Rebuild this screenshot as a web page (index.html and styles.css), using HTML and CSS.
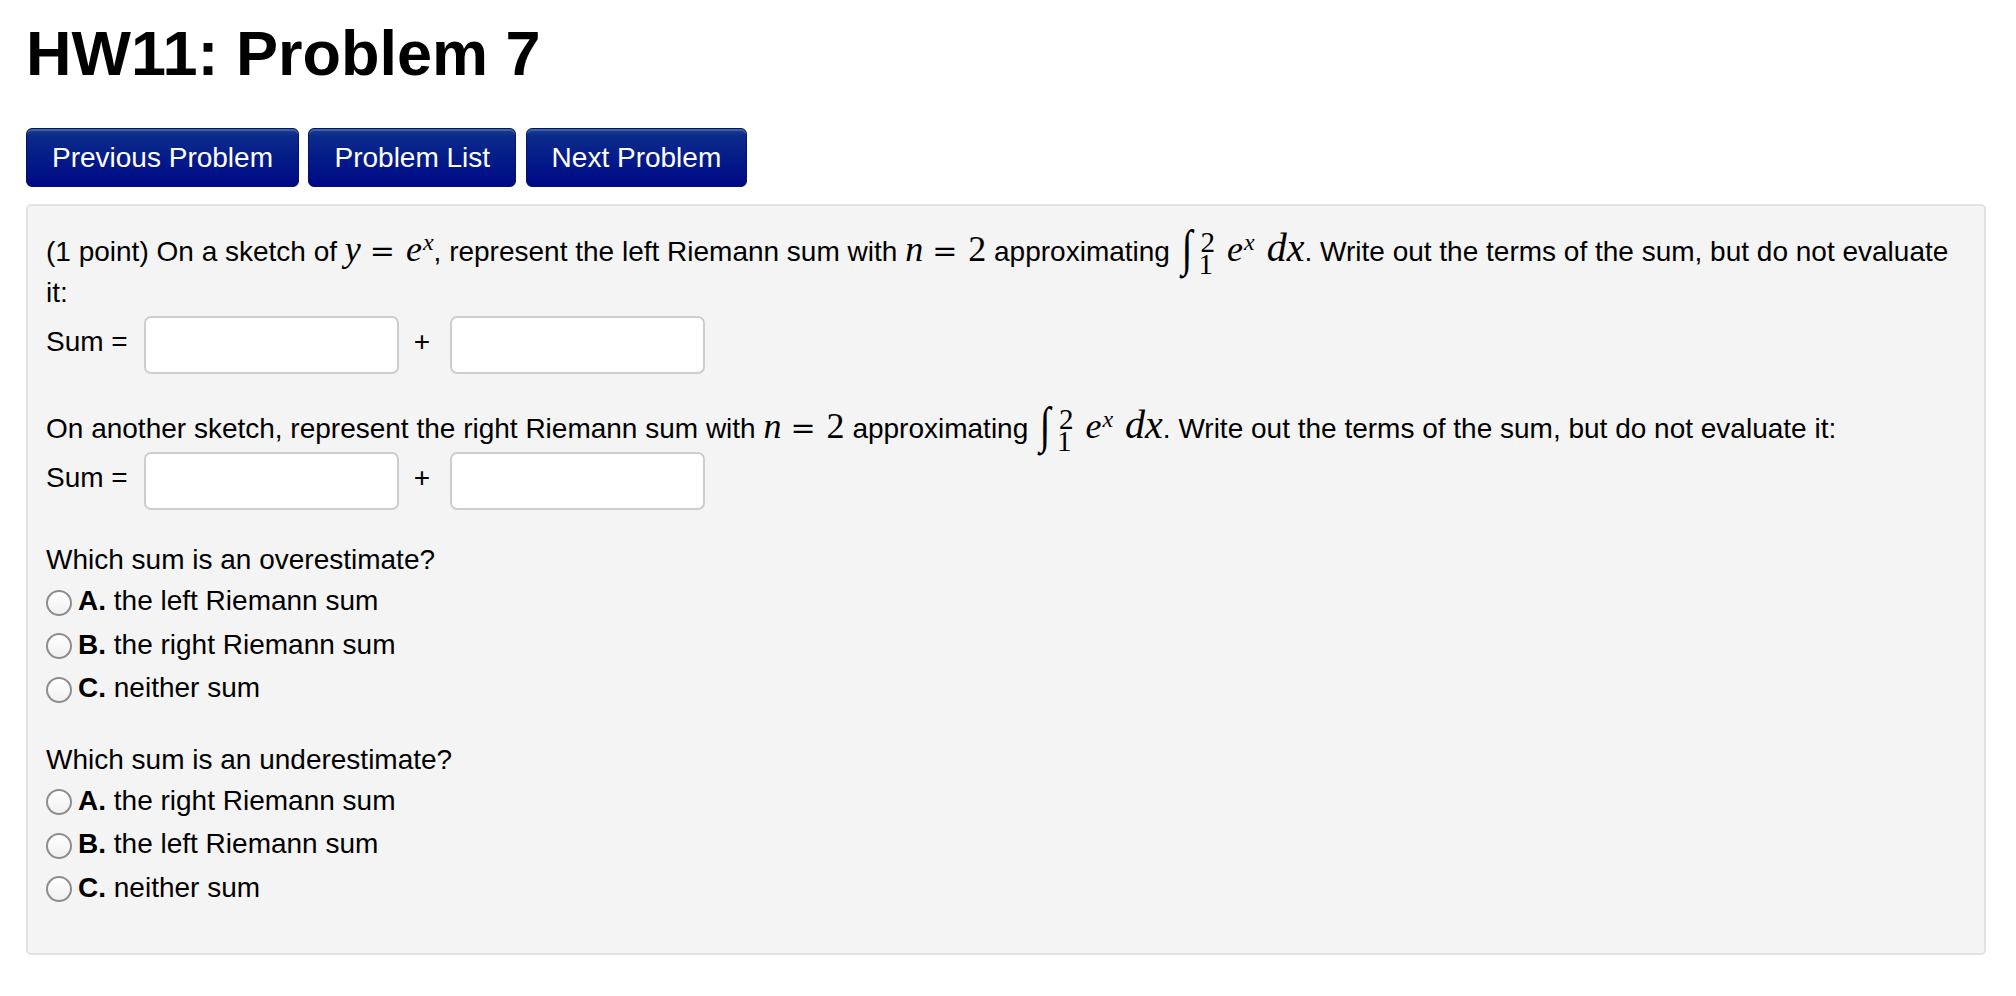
FILE: index.html
```html
<!DOCTYPE html>
<html lang="en">
<head>
    <meta charset="UTF-8">
    <meta name="viewport" content="width=device-width, initial-scale=1.0">
    <title>HW11: Problem 7</title>
<link rel="stylesheet" href="styles.css">
</head>
<body>
    <div class="page">
        <h1 class="title">HW11: Problem 7</h1>

        <div class="nav">
            <a class="nav-btn" href="#">Previous Problem</a>
            <a class="nav-btn" href="#">Problem List</a>
            <a class="nav-btn" href="#">Next Problem</a>
        </div>

        <div class="problem">
            <p class="text">(1 point) On a sketch of <span class="m"><i>y</i><span class="eq">=</span><i>e</i><sup><i>x</i></sup></span>, represent the left Riemann sum with <span class="m"><i>n</i><span class="eq">=</span>2</span> approximating <span class="m"><span class="int">∫</span><span class="lims"><span>2</span><span class="lo">1</span></span><i class="sp">e</i><sup><i>x</i></sup><i class="sp big">d</i><i class="big">x</i></span>. Write out the terms of the sum, but do not evaluate<br>it:</p>
            <div class="sum-row">
                <span class="sum-label">Sum =</span>
                <input class="ans" type="text">
                <span class="plus">+</span>
                <input class="ans" type="text">
            </div>

            <p class="text next">On another sketch, represent the right Riemann sum with <span class="m"><i>n</i><span class="eq">=</span>2</span> approximating <span class="m"><span class="int">∫</span><span class="lims"><span>2</span><span class="lo">1</span></span><i class="sp">e</i><sup><i>x</i></sup><i class="sp big">d</i><i class="big">x</i></span>. Write out the terms of the sum, but do not evaluate it:</p>
            <div class="sum-row">
                <span class="sum-label">Sum =</span>
                <input class="ans" type="text">
                <span class="plus">+</span>
                <input class="ans" type="text">
            </div>

            <div class="choice">
                <div class="question">Which sum is an overestimate?</div>
                <label class="opt"><input class="radio" type="radio" name="over"><span><b>A.</b> the left Riemann sum</span></label>
                <label class="opt"><input class="radio" type="radio" name="over"><span><b>B.</b> the right Riemann sum</span></label>
                <label class="opt"><input class="radio" type="radio" name="over"><span><b>C.</b> neither sum</span></label>
            </div>

            <div class="choice">
                <div class="question">Which sum is an underestimate?</div>
                <label class="opt"><input class="radio" type="radio" name="under"><span><b>A.</b> the right Riemann sum</span></label>
                <label class="opt"><input class="radio" type="radio" name="under"><span><b>B.</b> the left Riemann sum</span></label>
                <label class="opt"><input class="radio" type="radio" name="under"><span><b>C.</b> neither sum</span></label>
            </div>
        </div>
    </div>
</body>
</html>
```

FILE: styles.css
```css
body{
    margin: 0;
    background: #fff;
    color: #000;
    font-family: "Liberation Sans", Arial, sans-serif;
    font-size: 28px;
}
.page{
    padding: 22px 30px 40px 26px;
}
.title{
    margin: 0;
    font-size: 63px;
    line-height: 62px;
    font-weight: bold;
}

/* nav buttons */
.nav{
    display: flex;
    gap: 9.5px;
    margin-top: 44px;
}
.nav-btn{
    display: inline-block;
    padding: 14px 25px;
    line-height: 29px;
    color: #fff;
    text-decoration: none;
    border: 1px solid #05145c;
    border-radius: 6px;
    background: linear-gradient(#17418f 0%, #0b2b8b 12%, #031a89 55%, #000986 100%);
    box-shadow: inset 0 2px 0 rgba(255,255,255,0.18);
}

/* problem box */
.problem{
    margin-top: 17px;
    padding: 25px 18px 44px 18px;
    background: #f4f4f4;
    border: 2px solid #e2e2e2;
    border-radius: 5px;
}
.text{
    margin: 0;
    line-height: 41px;
}
.text.next{
    margin-top: 34px;
}
.sum-row{
    display: flex;
    align-items: flex-start;
    margin-top: 3px;
}
.sum-label{
    margin-top: 5px;
    line-height: 41px;
}
.ans{
    width: 255px;
    height: 58px;
    margin: 0 0 0 16px;
    box-sizing: border-box;
    border: 2px solid #cdcdcd;
    border-radius: 7px;
    background: #fff;
    font-size: 28px;
}
.plus{
    margin: 5px 4px 0 15px;
    line-height: 41px;
    width: 16px;
}

/* math */
.m{
    font-family: "Liberation Serif", "Times New Roman", serif;
    font-size: 36px;
    line-height: 30px;
    white-space: nowrap;
}
.m .eq{
    font-family: "DejaVu Serif", serif;
    font-size: 30px;
    margin: 0 11px 0 9px;
}
.m sup{
    font-size: 24px;
    line-height: 0;
    vertical-align: 11px;
    margin-left: 1px;
}
.m .int{
    display: inline-block;
    font-style: italic;
    margin: 0 9px 0 4px;
    transform: scale(1.1, 1.4);
    transform-origin: 50% 60%;
}
.m .lims{
    display: inline-flex;
    flex-direction: column;
    font-size: 29px;
    line-height: 22px;
    vertical-align: 9px;
    margin-bottom: -7px;
}
.m .lims .lo{
    margin-left: -2px;
}
.m .sp{
    margin-left: 12px;
}
.m .big{
    font-size: 40px;
}

/* multiple choice */
.choice{
    margin-top: 30px;
}
.question{
    line-height: 39px;
}
.opt{
    display: flex;
    align-items: center;
    height: 43.5px;
    line-height: 43px;
}
.radio{
    appearance: none;
    -webkit-appearance: none;
    width: 26px;
    height: 26px;
    margin: 4px 6px 0 0;
    box-sizing: border-box;
    border: 2px solid #8d8d8d;
    border-radius: 50%;
    background: linear-gradient(#fff, #f0f0f0);
}
```
